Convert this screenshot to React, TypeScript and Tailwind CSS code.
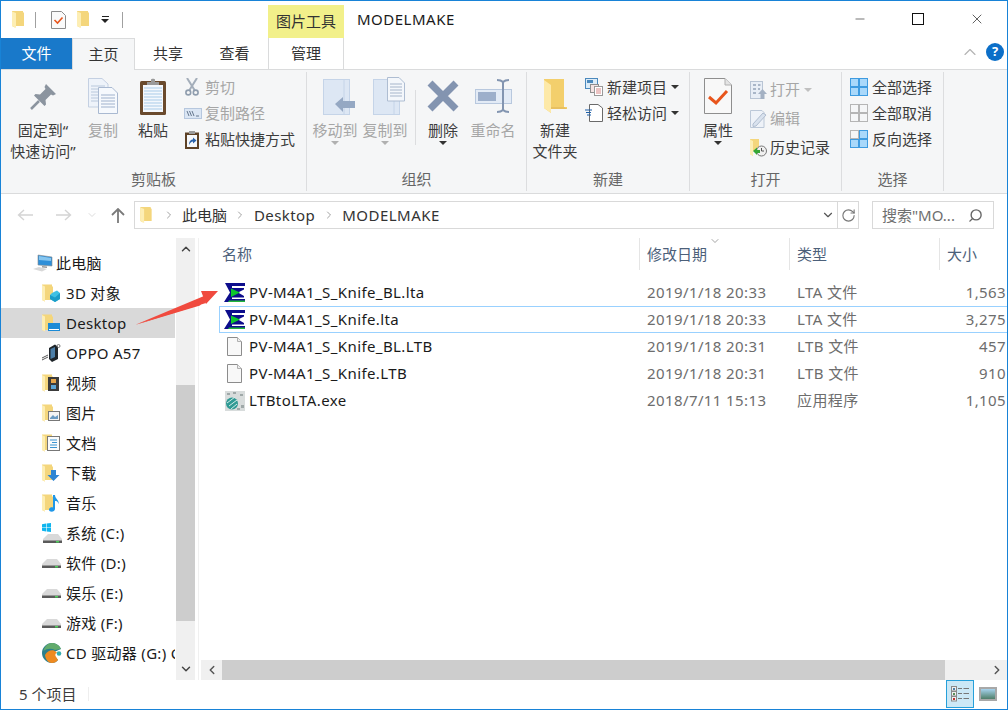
import type { ReactNode } from "react";
import { ChevronDown, ChevronLeft, ChevronRight, ChevronUp, Minus, RotateCw, Search, X } from "lucide-react";

function FolderTall({ className = "h-[17px] w-[12px]" }: { className?: string }) {
  return (
    <svg viewBox="0 0 12 17" className={className}>
      <path d="M0 0H11V1L12 2V15H3V16.5L0 15Z" fill="#f4d67c" />
      <path d="M0 0.5L4 2V17L0 15Z" fill="#fdeeb4" />
    </svg>
  );
}

function NavFolder({ children }: { children?: ReactNode }) {
  return (
    <svg viewBox="0 0 18 18" className="h-[18px] w-[18px]">
      <path d="M0 0.5H10V2L11 3V16H3V17.5L0 16Z" fill="#f4d67c" />
      <path d="M0 1L3 2.5V17.5L0 16Z" fill="#fdeeb4" />
      {children}
    </svg>
  );
}

function Caret({ muted = false }: { muted?: boolean }) {
  return (
    <div
      className={`h-0 w-0 border-x-[4px] border-t-[4px] border-x-transparent ${
        muted ? "border-t-[#b0b0b0]" : "border-t-[#333333]"
      }`}
    />
  );
}

function SmallCaret({ muted = false }: { muted?: boolean }) {
  return (
    <span
      className={`ml-[4px] inline-block h-0 w-0 border-x-[4px] border-t-[4px] border-x-transparent ${
        muted ? "border-t-[#c0c0c0]" : "border-t-[#333333]"
      }`}
    />
  );
}

function LargeButton(props: {
  w: string;
  icon: ReactNode;
  lines: string[];
  muted?: boolean;
  caret?: boolean;
}) {
  return (
    <div className={`flex shrink-0 flex-col items-center ${props.w}`}>
      <div className="flex h-[48px] items-center justify-center">{props.icon}</div>
      {props.lines.map((l) => (
        <div key={l} className={`h-[21px] whitespace-nowrap leading-[21px] ${props.muted ? "text-[#a6a6a6]" : "text-[#3c3c3c]"}`}>
          {l}
        </div>
      ))}
      {props.caret ? <Caret muted={props.muted} /> : null}
    </div>
  );
}

function SmallRow(props: { slot: string; h: string; icon: ReactNode; text: string; muted?: boolean; caret?: boolean }) {
  return (
    <div className={`flex items-center whitespace-nowrap ${props.h} ${props.muted ? "text-[#a6a6a6]" : "text-[#3c3c3c]"}`}>
      <div className={`flex shrink-0 items-center ${props.slot}`}>{props.icon}</div>
      {props.text}
      {props.caret ? <SmallCaret muted={props.muted} /> : null}
    </div>
  );
}

function Group({ w, label, children }: { w: string; label: string; children: ReactNode }) {
  return (
    <div className={`flex shrink-0 flex-col border-r border-[#dcdddf] ${w}`}>
      <div className="flex h-[98px] min-h-0 flex-1">{children}</div>
      <div className="h-[20px] text-center leading-[16px] text-[#666666]">{label}</div>
    </div>
  );
}

function PinIcon() {
  return (
    <svg viewBox="0 0 27 27" className="h-[27px] w-[27px]">
      <path d="M16 1L26 11L23 12.5L21 11.5L15.5 17L16 21.5L14.5 23L4 12.5L5.5 11L10 11.5L15.5 6L14.5 4Z" fill="#8b949f" />
      <path d="M9 18L1 26" stroke="#8b949f" strokeWidth="2.5" />
    </svg>
  );
}

function DocLines({ x, y, w, h, c = "#b9c8dc" }: { x: number; y: number; w: number; h: number; c?: string }) {
  const rows = [];
  for (let i = 0; i < Math.floor(h / 3); i++) {
    rows.push(<path key={i} d={`M${x} ${y + i * 3}H${x + w}`} stroke={c} strokeWidth="1" />);
  }
  return <>{rows}</>;
}

function CopyIcon() {
  return (
    <svg viewBox="0 0 30 36" className="h-[36px] w-[30px]">
      <path d="M0.5 0.5H14L20 6V29H0.5Z" fill="#eef3fa" stroke="#c4d0e2" />
      <DocLines x={3} y={8} w={14} h={19} />
      <path d="M10.5 9.5H24L29.5 15V35.5H10.5Z" fill="#f6f9fd" stroke="#a9b9d1" />
      <DocLines x={13} y={17} w={14} h={17} c="#9fb1cc" />
    </svg>
  );
}

function PasteIcon() {
  return (
    <svg viewBox="0 0 26 37" className="h-[37px] w-[26px]">
      <rect x="0" y="3" width="26" height="34" rx="1.5" fill="#6a4a2d" />
      <rect x="3" y="7" width="20" height="27" fill="#f4f8fd" />
      <DocLines x={4} y={10} w={18} h={24} c="#a9cbe8" />
      <path d="M7 7V4H11V1.5C11 .5 15 .5 15 1.5V4H19V7Z" fill="#9a9a9a" />
    </svg>
  );
}

function ScissorsIcon() {
  return (
    <svg viewBox="0 0 14 18" className="h-[18px] w-[14px]">
      <path d="M2 0L9.5 12M12 0L4.5 12" stroke="#a4aeba" strokeWidth="2" />
      <circle cx="3.3" cy="14.5" r="2.4" fill="none" stroke="#8f9dae" strokeWidth="1.6" />
      <circle cx="10.7" cy="14.5" r="2.4" fill="none" stroke="#8f9dae" strokeWidth="1.6" />
    </svg>
  );
}

function CopyPathIcon() {
  return (
    <svg viewBox="0 0 18 11" className="h-[11px] w-[18px]">
      <rect x="0.5" y="0.5" width="17" height="10" fill="#dbe6f4" stroke="#b6c7de" />
      <path d="M3 3L5 8M5.5 3L7.5 8M8 3L10 8" stroke="#66788f" strokeWidth="1" />
      <path d="M12 8H15" stroke="#66788f" />
    </svg>
  );
}

function PasteShortcutIcon() {
  return (
    <svg viewBox="0 0 14 18" className="h-[18px] w-[14px]">
      <rect x="0" y="1.5" width="14" height="16.5" fill="#5d4126" />
      <rect x="2" y="4" width="10" height="12" fill="#f6f8fb" />
      <rect x="4" y="0" width="6" height="3" fill="#9a9a9a" />
      <path d="M4 14C4 10 6 8.5 8 8.5V6.5L11.5 9.5L8 12.5V10.5C6.5 10.5 5 12 4 14Z" fill="#2a62a9" />
    </svg>
  );
}

function MoveIcon({ copy = false }: { copy?: boolean }) {
  return (
    <svg viewBox="0 0 34 38" className="ml-[8px] h-[38px] w-[34px]">
      <rect x="1.5" y="2.5" width="26" height="35" fill="#dde7f4" stroke="#c5d4e8" />
      <path d="M22 3V37" stroke="#c5d4e8" />
      {copy ? (
        <>
          <path d="M15.5 0.5H27L32.5 6V24H15.5Z" fill="#f4f7fb" stroke="#aebdd2" />
          <DocLines x={18} y={7} w={12} h={16} c="#a6b5ca" />
        </>
      ) : (
        <path d="M13 27L21 20V24H33V31H21V35Z" fill="#95a8c3" />
      )}
    </svg>
  );
}

function DeleteIcon() {
  return (
    <svg viewBox="0 0 32 32" className="h-[32px] w-[32px]">
      <path d="M3 3L29 29M29 3L3 29" stroke="#8394b0" strokeWidth="7" />
    </svg>
  );
}

function RenameIcon() {
  return (
    <svg viewBox="0 0 37 34" className="h-[34px] w-[37px]">
      <rect x="0.5" y="10.5" width="36" height="14" fill="#e3ebf6" stroke="#b8c8de" />
      <rect x="3" y="13" width="18" height="9" fill="#9dafcb" />
      <path d="M22 1C25 1 27 2 28 3C29 2 31 1 34 1M22 33C25 33 27 32 28 31C29 32 31 33 34 33M28 3V31" stroke="#8395b1" strokeWidth="2" fill="none" />
    </svg>
  );
}

function NewFolderIcon() {
  return (
    <svg viewBox="0 0 24 34" className="h-[34px] w-[24px]">
      <path d="M1 0H21V28H24V30H8V34L1 29Z" fill="#f3cf6c" />
      <path d="M1 1L8 6V34L1 29Z" fill="#fde9a8" />
      <path d="M8 30H24L21 28H8Z" fill="#e8c060" />
    </svg>
  );
}

function NewItemIcon() {
  return (
    <svg viewBox="0 0 18 18" className="h-[18px] w-[18px]">
      <rect x="0.5" y="0.5" width="12" height="10" fill="#dcecf8" stroke="#4b89bd" />
      <rect x="2" y="2" width="6" height="3" fill="#4b89bd" />
      <rect x="5.5" y="6.5" width="8" height="8" fill="#f4e3e3" stroke="#8f8f8f" />
      <rect x="9.5" y="8.5" width="8" height="9" fill="#fff" stroke="#999999" />
      <path d="M11 11H16M11 13H16M11 15H16" stroke="#d98787" />
    </svg>
  );
}

function EasyAccessIcon() {
  return (
    <svg viewBox="0 0 18 18" className="h-[18px] w-[18px]">
      <path d="M4.5 0.5H13L17.5 4V17.5H4.5Z" fill="#fff" stroke="#6a6a6a" />
      <path d="M0 6H7M1 8.5H6M2 11H6" stroke="#1d5fa8" strokeWidth="1" />
    </svg>
  );
}

function PropertiesIcon() {
  return (
    <svg viewBox="0 0 28 36" className="h-[36px] w-[28px]">
      <path d="M0.5 0.5H21L27.5 7V35.5H0.5Z" fill="#f8f8f8" stroke="#8e8e8e" />
      <path d="M21 0.5V7H27.5" fill="#e4e4e4" stroke="#b0b0b0" />
      <path d="M5 19L12 25L23 13" fill="none" stroke="#e8551c" strokeWidth="3" />
    </svg>
  );
}

function OpenIcon() {
  return (
    <svg viewBox="0 0 17 18" className="h-[18px] w-[17px]">
      <rect x="0.5" y="0.5" width="12" height="17" fill="#e8eef6" stroke="#b8c4d4" />
      <path d="M3 4H6M3 8H6M3 12H6M8 4H10.5M8 8H10" stroke="#a9b6c8" strokeWidth="2" />
      <path d="M8 13L12.5 8L17 13H14.5V18H10.5V13Z" fill="#a4b1c3" />
    </svg>
  );
}

function EditIcon() {
  return (
    <svg viewBox="0 0 17 18" className="h-[18px] w-[17px]">
      <path d="M0.5 0.5H12L14 2.5V17.5H0.5Z" fill="#eef2f8" stroke="#bcc8d8" />
      <path d="M3 14L13 3L16 5L6 16L3 16.5Z" fill="#d9e2ee" stroke="#b0bdcf" />
    </svg>
  );
}

function HistoryIcon() {
  return (
    <svg viewBox="0 0 17 18" className="h-[18px] w-[17px]">
      <path d="M0 0H9V12H3V17L0 15Z" fill="#f4d67c" />
      <path d="M0 0.5L3 2V17L0 15Z" fill="#fdeeb4" />
      <circle cx="11.5" cy="12" r="5" fill="#f0f0f0" stroke="#777777" />
      <path d="M11.5 9V12H14" stroke="#555555" fill="none" />
      <path d="M3 12L7 8.5V11H10V14H7V16Z" fill="#35a635" />
    </svg>
  );
}

function SelectGrid({ cells, stroke }: { cells: string[]; stroke: string[] }) {
  const pos = [
    [0.5, 0.5],
    [9.5, 0.5],
    [0.5, 9.5],
    [9.5, 9.5],
  ];
  return (
    <svg viewBox="0 0 18 18" className="h-[18px] w-[18px]">
      {pos.map((p, i) => (
        <rect key={i} x={p[0]} y={p[1]} width="8" height="8" fill={cells[i]} stroke={stroke[i]} />
      ))}
    </svg>
  );
}

function LtaIcon() {
  return (
    <svg viewBox="0 0 21 19" className="h-[19px] w-[21px]">
      <path d="M1 0H21V3H8V5H20V6.5L14 9.5L20 13V14.5H8V16H21V19H0L6 9.5Z" fill="#0d0d8c" />
      <path d="M7 5.5L16 9.5L7 14Z" fill="#0cc62c" />
      <path d="M5 17.5H21V19H4Z" fill="#22b83c" />
    </svg>
  );
}

function BlankFileIcon() {
  return (
    <svg viewBox="0 0 15 19" className="h-[19px] w-[15px]">
      <path d="M0.5 0.5H10.5L14.5 4.5V18.5H0.5Z" fill="#f8f8f8" stroke="#8c8c8c" />
      <path d="M10.5 0.5V4.5H14.5" fill="#eeeeee" stroke="#b0b0b0" />
    </svg>
  );
}

function ExeIcon() {
  return (
    <svg viewBox="0 0 20 20" className="h-[20px] w-[20px]">
      <rect width="20" height="20" fill="#d8dcdc" />
      <path d="M2 2H5V4H2ZM8 1H11V3H8ZM15 3H18V5H15ZM16 14H19V17H16ZM12 17H15V19H12Z" fill="#9fa8a8" />
      <circle cx="7" cy="12.5" r="6" fill="#2f9a94" />
      <path d="M2 12L10 6M4 15L12 9M6 18L12 13" stroke="#d3ece9" strokeWidth="1" />
    </svg>
  );
}

function DriveIcon() {
  return (
    <svg viewBox="0 0 19 9" className="h-[9px] w-[19px]">
      <path d="M5 0H15L19 5V7H0V5Z" fill="#d9d9d9" />
      <path d="M0 6.5H19V9H0Z" fill="#5a5a5a" />
      <rect x="13" y="7" width="3" height="1.5" fill="#4dd15a" />
    </svg>
  );
}

function WinDriveIcon() {
  return (
    <div className="relative h-[20px] w-[20px]">
      <div className="absolute bottom-0 right-0">
        <DriveIcon />
      </div>
      <svg viewBox="0 0 9 9" className="absolute left-0 top-0 h-[9px] w-[9px]">
        <path d="M0 1.2L4 .6V4.2H0ZM4.6 .5L9 0V4.2H4.6ZM0 4.8H4V8.4L0 7.8ZM4.6 4.8H9V9L4.6 8.5Z" fill="#10b5ee" />
      </svg>
    </div>
  );
}

function CdIcon() {
  return (
    <svg viewBox="0 0 20 20" className="h-[20px] w-[20px]">
      <path d="M10 0C14 0 17.5 2.5 19 6L10 10L16 17C14.5 18.8 12.5 20 10 20C4.5 20 0 15.5 0 10C0 4.5 4.5 0 10 0Z" fill="#2b7f8c" />
      <path d="M10 0C14 0 17.5 2.5 19 6L13 7C9 5 5 5.5 1.5 8C2.5 3.5 6 0 10 0Z" fill="#62ab6c" />
      <path d="M3 12C5 8 9 6.5 12 7.5L15 9.5C13.5 10.5 13 11.5 13.5 13L16 17C14.5 18.8 12.5 20 10 20C6.5 20 3.5 16.5 3 12Z" fill="#ee8a21" />
      <circle cx="17" cy="10.5" r="2.3" fill="#35aeb0" />
    </svg>
  );
}

const navItems: { label: string; icon: ReactNode; active?: boolean }[] = [
  {
    label: "3D 对象",
    icon: (
      <NavFolder>
        <path d="M10 9L15 6.5L18 9V15L13 18L8 15V11Z" fill="#3fc1e3" />
        <path d="M8 11L13 13.5L18 9V15L13 18L8 15Z" fill="#1b9dc8" />
      </NavFolder>
    ),
  },
  {
    label: "Desktop",
    active: true,
    icon: (
      <NavFolder>
        <rect x="6" y="9" width="12" height="8" fill="#1b8ad6" />
        <rect x="7" y="15" width="10" height="1" fill="#ffffff" />
      </NavFolder>
    ),
  },
  {
    label: "OPPO A57",
    icon: (
      <svg viewBox="0 0 19 18" className="h-[18px] w-[19px]">
        <path d="M7 4L13 0.5L16 3V15L10 18L7 15Z" fill="#1e2429" />
        <path d="M8.5 5L13 3V13L8.5 15Z" fill="#4b7ea8" />
        <path d="M0 14L6 11M0 16L6 13" stroke="#555555" />
        <circle cx="16.5" cy="2" r="1.5" fill="none" stroke="#777777" />
      </svg>
    ),
  },
  {
    label: "视频",
    icon: (
      <NavFolder>
        <rect x="6" y="3" width="11" height="14" fill="#3b3b3b" />
        <rect x="9" y="5" width="5" height="4" fill="#e6a64b" />
        <rect x="9" y="11" width="5" height="4" fill="#5ba5d6" />
      </NavFolder>
    ),
  },
  {
    label: "图片",
    icon: (
      <NavFolder>
        <rect x="6.5" y="7.5" width="11" height="9" fill="#f4f4f4" stroke="#777777" />
        <path d="M8 14L11 11L13 13L16 11V15H8Z" fill="#6b9bc3" />
      </NavFolder>
    ),
  },
  {
    label: "文档",
    icon: (
      <NavFolder>
        <rect x="5.5" y="2.5" width="12" height="14" fill="#fbfbfb" stroke="#777777" />
        <path d="M8 6H15M10 8.5H15M8 11H15M8 13.5H15" stroke="#3b94d1" />
      </NavFolder>
    ),
  },
  {
    label: "下载",
    icon: (
      <NavFolder>
        <path d="M9 6H14V11H17.5L11.5 17L5.5 11H9Z" fill="#2f86d3" />
      </NavFolder>
    ),
  },
  {
    label: "音乐",
    icon: (
      <NavFolder>
        <path d="M11 1H13C13 5 17.5 6 16.5 10C16 7.5 14.5 7 13 7V15C13 17 10.5 18 8.5 17.5C6.5 17 6.5 14.5 8.5 13.5C9.5 13 10.5 13 11 13.5Z" fill="#1f97e8" />
      </NavFolder>
    ),
  },
  { label: "系统 (C:)", icon: <WinDriveIcon /> },
  { label: "软件 (D:)", icon: <DriveIcon /> },
  { label: "娱乐 (E:)", icon: <DriveIcon /> },
  { label: "游戏 (F:)", icon: <DriveIcon /> },
  { label: "CD 驱动器 (G:) CC", icon: <CdIcon /> },
];

const files = [
  { name: "PV-M4A1_S_Knife_BL.lta", date: "2019/1/18 20:33", type: "LTA 文件", size: "1,563", icon: <LtaIcon /> },
  { name: "PV-M4A1_S_Knife.lta", date: "2019/1/18 20:33", type: "LTA 文件", size: "3,275", icon: <LtaIcon />, selected: true },
  { name: "PV-M4A1_S_Knife_BL.LTB", date: "2019/1/18 20:31", type: "LTB 文件", size: "457", icon: <BlankFileIcon /> },
  { name: "PV-M4A1_S_Knife.LTB", date: "2019/1/18 20:31", type: "LTB 文件", size: "910", icon: <BlankFileIcon /> },
  { name: "LTBtoLTA.exe", date: "2018/7/11 15:13", type: "应用程序", size: "1,105", icon: <ExeIcon /> },
];

export default function App() {
  return (
    <div className="relative flex h-[710px] w-[1008px] flex-col overflow-hidden border border-[#1883d7] bg-white font-['Noto_Sans','Noto_Sans_CJK_SC',sans-serif] text-[15px] text-[#1a1a1a]">
      {/* title bar */}
      <div className="flex h-[37px] shrink-0 items-start">
        <div className="flex h-[37px] w-[267px] shrink-0 items-center pl-[11px]">
          <FolderTall />
          <div className="ml-[11px] h-[16px] w-px bg-[#a0a0a0]" />
          <svg viewBox="0 0 15 18" className="ml-[15px] h-[18px] w-[15px]">
            <path d="M0.5 0.5H10.5L14.5 4.5V17.5H0.5Z" fill="#fafafa" stroke="#8c8c8c" />
            <path d="M3.5 9L6.5 12L11.5 6.5" fill="none" stroke="#e8551c" strokeWidth="1.6" />
          </svg>
          <div className="ml-[11px]">
            <FolderTall />
          </div>
          <div className="ml-[12px] flex flex-col items-center">
            <div className="mb-[2px] h-px w-[7px] bg-[#222222]" />
            <div className="h-0 w-0 border-x-[4px] border-t-[4px] border-x-transparent border-t-[#222222]" />
          </div>
          <div className="ml-[13px] h-[16px] w-px bg-[#a0a0a0]" />
        </div>
        <div className="mt-[4px] flex h-[33px] w-[76px] shrink-0 items-center justify-center bg-[#f2f08a] text-[#333333]">图片工具</div>
        <div className="ml-[13px] mt-[7px] tracking-[0.5px] text-[#1a1a1a]">MODELMAKE</div>
        <div className="ml-auto flex items-center pt-[10px]">
          <Minus className="mr-[45px] h-[14px] w-[14px] text-[#111111]" strokeWidth={1} absoluteStrokeWidth />
          <div className="mr-[45px] h-[12px] w-[12px] border border-[#111111]" />
          <X className="mr-[22px] h-[16px] w-[16px] text-[#111111]" strokeWidth={1} absoluteStrokeWidth />
        </div>
      </div>

      {/* tabs */}
      <div className="flex h-[32px] shrink-0 border-b border-[#dadbdc]">
        <div className="flex h-[31px] w-[71px] items-center justify-center bg-[#1979ca] pb-[1px] text-white">文件</div>
        <div className="z-10 flex h-[32px] w-[63px] items-center justify-center border-x border-t border-[#dadbdc] bg-[#f5f6f7] pb-[1px] text-[#333333]">主页</div>
        <div className="flex h-[31px] w-[66px] items-center justify-center pb-[1px] text-[#333333]">共享</div>
        <div className="flex h-[31px] w-[67px] items-center justify-center pb-[1px] text-[#333333]">查看</div>
        <div className="flex h-[31px] w-[76px] items-center justify-center border-x border-[#dadbdc] pb-[1px] text-[#333333]">管理</div>
        <div className="ml-auto flex items-center pb-[3px]">
          <ChevronUp className="mr-[6px] h-[20px] w-[20px] text-[#b4b4b4]" strokeWidth={1.4} />
          <div className="mr-[3px] flex h-[18px] w-[18px] items-center justify-center rounded-full bg-[#0c6fc8] text-[13px] font-bold text-white">?</div>
        </div>
      </div>

      {/* ribbon */}
      <div className="flex h-[124px] shrink-0 border-b border-[#dadbdc] bg-[#f5f6f7] pt-[2px] pb-[2px]">
        <Group w="w-[306px]" label="剪贴板">
          <div className="ml-[5px] flex">
            <LargeButton w="w-[74px]" icon={<PinIcon />} lines={["固定到“", "快速访问”"]} />
            <LargeButton w="w-[46px]" icon={<CopyIcon />} lines={["复制"]} muted />
            <LargeButton w="w-[54px]" icon={<PasteIcon />} lines={["粘贴"]} />
          </div>
          <div className="ml-[4px] pt-[2px]">
            <SmallRow slot="w-[21px] pl-[1px]" h="h-[26px]" icon={<ScissorsIcon />} text="剪切" muted />
            <SmallRow slot="w-[21px]" h="h-[26px]" icon={<CopyPathIcon />} text="复制路径" muted />
            <SmallRow slot="w-[21px] pl-[1px]" h="h-[27px]" icon={<PasteShortcutIcon />} text="粘贴快捷方式" />
          </div>
        </Group>
        <Group w="w-[220px]" label="组织">
          <div className="flex">
            <LargeButton w="w-[50px] ml-[3px]" icon={<MoveIcon />} lines={["移动到"]} muted caret />
            <LargeButton w="w-[50px]" icon={<MoveIcon copy />} lines={["复制到"]} muted caret />
            <div className="ml-[5px] mr-[2px] mt-[18px] h-[55px] w-px bg-[#dcdddf]" />
            <LargeButton w="w-[50px]" icon={<DeleteIcon />} lines={["删除"]} caret />
            <LargeButton w="w-[50px]" icon={<RenameIcon />} lines={["重命名"]} muted />
          </div>
        </Group>
        <Group w="w-[163px]" label="新建">
          <LargeButton w="w-[50px] ml-[3px]" icon={<NewFolderIcon />} lines={["新建", "文件夹"]} />
          <div className="ml-[5px] pt-[2px]">
            <SmallRow slot="w-[22px]" h="h-[26px]" icon={<NewItemIcon />} text="新建项目" caret />
            <SmallRow slot="w-[22px]" h="h-[26px]" icon={<EasyAccessIcon />} text="轻松访问" caret />
          </div>
        </Group>
        <Group w="w-[152px]" label="打开">
          <LargeButton w="w-[50px] ml-[3px]" icon={<PropertiesIcon />} lines={["属性"]} caret />
          <div className="ml-[7px] pt-[3px]">
            <SmallRow slot="w-[20px]" h="h-[29px]" icon={<OpenIcon />} text="打开" muted caret />
            <SmallRow slot="w-[20px]" h="h-[29px]" icon={<EditIcon />} text="编辑" muted />
            <SmallRow slot="w-[20px]" h="h-[29px]" icon={<HistoryIcon />} text="历史记录" />
          </div>
        </Group>
        <Group w="w-[102px]" label="选择">
          <div className="ml-[8px] pt-[2px]">
            <SmallRow
              slot="w-[22px]"
              h="h-[26px]"
              icon={<SelectGrid cells={["#a9d8fa", "#a9d8fa", "#a9d8fa", "#a9d8fa"]} stroke={["#3e9be0", "#3e9be0", "#3e9be0", "#3e9be0"]} />}
              text="全部选择"
            />
            <SmallRow
              slot="w-[22px]"
              h="h-[26px]"
              icon={<SelectGrid cells={["#f5f6f7", "#f5f6f7", "#f5f6f7", "#f5f6f7"]} stroke={["#b5b5b5", "#b5b5b5", "#b5b5b5", "#b5b5b5"]} />}
              text="全部取消"
            />
            <SmallRow
              slot="w-[22px]"
              h="h-[26px]"
              icon={<SelectGrid cells={["#f5f6f7", "#a9d8fa", "#a9d8fa", "#a9d8fa"]} stroke={["#b5b5b5", "#3e9be0", "#3e9be0", "#3e9be0"]} />}
              text="反向选择"
            />
          </div>
        </Group>
      </div>

      {/* address bar */}
      <div className="flex h-[44px] shrink-0 items-center pb-[2px]">
        <svg viewBox="0 0 16 12" className="ml-[16px] h-[12px] w-[16px]">
          <path d="M7 1L1.5 6L7 11M1.5 6H16" fill="none" stroke="#d4d4d4" strokeWidth="1.4" />
        </svg>
        <svg viewBox="0 0 16 12" className="ml-[23px] h-[12px] w-[16px]">
          <path d="M9 1L14.5 6L9 11M14.5 6H0" fill="none" stroke="#d4d4d4" strokeWidth="1.4" />
        </svg>
        <ChevronDown className="ml-[14px] h-[12px] w-[12px] text-[#d0d0d0]" strokeWidth={1.5} />
        <svg viewBox="0 0 14 15" className="ml-[13px] h-[15px] w-[14px]">
          <path d="M1 7L7 1L13 7M7 1V15" fill="none" stroke="#7a7a7a" strokeWidth="1.8" />
        </svg>
        <div className="ml-[9px] flex h-[28px] w-[725px] shrink-0 items-center border border-[#d9d9d9] pl-[5px] text-[#333333]">
          <FolderTall className="h-[16px] w-[12px]" />
          <ChevronRight className="ml-[11px] mr-[7px] h-[12px] w-[12px] text-[#8a8a8a]" strokeWidth={1.6} />
          此电脑
          <ChevronRight className="ml-[7px] mr-[8px] h-[12px] w-[12px] text-[#8a8a8a]" strokeWidth={1.6} />
          <span className="tracking-[0.4px]">Desktop</span>
          <ChevronRight className="ml-[8px] mr-[7px] h-[12px] w-[12px] text-[#8a8a8a]" strokeWidth={1.6} />
          <span className="tracking-[0.5px]">MODELMAKE</span>
          <ChevronDown className="ml-auto mr-[2px] h-[14px] w-[14px] text-[#555555]" strokeWidth={2} />
          <div className="flex h-full w-[21px] items-center justify-center border-l border-[#d9d9d9]">
            <RotateCw className="h-[15px] w-[15px] text-[#777777]" strokeWidth={1.8} />
          </div>
        </div>
        <div className="ml-[13px] flex h-[28px] w-[122px] shrink-0 items-center border border-[#d9d9d9] pl-[9px] text-[#6f6f6f]">
          搜索"MO...
          <Search className="ml-auto mr-[10px] h-[15px] w-[15px] -scale-x-100 text-[#666666]" strokeWidth={2.2} />
        </div>
      </div>

      {/* main */}
      <div className="flex min-h-0 flex-1">
        <div className="flex w-[174px] shrink-0 flex-col overflow-hidden pt-[10px] tracking-[0.3px]">
          <div className="flex h-[30px] shrink-0 items-center whitespace-nowrap pl-[32px]">
            <svg viewBox="0 0 20 18" className="mr-[3px] h-[18px] w-[20px]">
              <path d="M5 1L19 3V12L5 11Z" fill="#2f8fd8" stroke="#8a8a8a" strokeWidth="0.6" />
              <path d="M6 2L18 4V7L6 6Z" fill="#86c6f0" />
              <path d="M9 12L14 12.5L14 14L9 13.5Z" fill="#9a9a9a" />
              <path d="M0 15L6 13L14 15L9 17.5Z" fill="#d8d8d8" />
            </svg>
            此电脑
          </div>
          {navItems.map((n) => (
            <div
              key={n.label}
              className={`flex h-[30px] shrink-0 items-center whitespace-nowrap pl-[41px] ${n.active ? "bg-[#d9d9d9]" : ""}`}
            >
              <div className="flex w-[24px] shrink-0 items-center">{n.icon}</div>
              {n.label}
            </div>
          ))}
        </div>

        <div className="ml-[1px] flex h-[442px] w-[19px] shrink-0 flex-col items-center bg-[#f0f0f0]">
          <div className="flex h-[22px] items-center">
            <ChevronUp className="h-[14px] w-[14px] text-[#444444]" strokeWidth={2.5} />
          </div>
          <div className="mt-[125px] h-[236px] w-full bg-[#cdcdcd]" />
          <div className="mt-auto flex h-[22px] items-center">
            <ChevronDown className="h-[14px] w-[14px] text-[#444444]" strokeWidth={2.5} />
          </div>
        </div>
        <div className="ml-[3px] w-px shrink-0 bg-[#f0f0f0]" />

        <div className="flex min-w-0 flex-1 flex-col pl-[1px]">
          <div className="relative flex h-[32px] shrink-0 text-[#4c607a]">
            <div className="flex w-[439px] shrink-0 items-center pl-[22px] text-[#4c607a]">名称</div>
            <div className="flex w-[150px] shrink-0 items-center border-l border-[#e5e5e5] pl-[7px]">修改日期</div>
            <div className="flex w-[150px] shrink-0 items-center border-l border-[#e5e5e5] pl-[7px]">类型</div>
            <div className="flex flex-1 items-center border-l border-[#e5e5e5] pl-[7px]">大小</div>
            <ChevronDown className="absolute left-[509px] top-[-3px] h-[12px] w-[12px] text-[#666666]" strokeWidth={1.2} />
          </div>
          <div className="flex flex-1 flex-col pl-[19px] pt-[9px] tracking-[0.4px]">
            {files.map((f) => (
              <div
                key={f.name}
                className={`flex h-[27px] shrink-0 items-center whitespace-nowrap border-y border-l pl-[4px] ${
                  f.selected ? "border-[#99d1ff]" : "border-transparent"
                }`}
              >
                <div className="flex w-[25px] shrink-0 items-center justify-center pr-[4px]">{f.icon}</div>
                <div className="w-[398px] shrink-0">{f.name}</div>
                <div className="w-[150px] shrink-0 text-[#6d6d6d]">{f.date}</div>
                <div className="w-[150px] shrink-0 text-[#6d6d6d]">{f.type}</div>
                <div className="w-[59px] shrink-0 text-right text-[#6d6d6d]">{f.size}</div>
              </div>
            ))}
          </div>
          <div className="ml-[1px] mt-auto flex h-[20px] shrink-0 items-center bg-[#f0f0f0]">
            <div className="flex w-[21px] shrink-0 items-center justify-center">
              <ChevronLeft className="h-[14px] w-[14px] text-[#555555]" strokeWidth={2.5} />
            </div>
            <div className="h-full w-[723px] bg-[#cdcdcd]" />
            <div className="ml-auto flex w-[20px] items-center justify-center">
              <ChevronRight className="h-[14px] w-[14px] text-[#555555]" strokeWidth={2.5} />
            </div>
          </div>
        </div>
      </div>

      {/* status bar */}
      <div className="flex h-[29px] shrink-0 items-start text-[#3c3c3c]">
        <div className="ml-[18px] mt-[3px] w-[69px]">5 个项目</div>
        <div className="mt-[7px] h-[14px] w-px bg-[#eeeeee]" />
        <div className="ml-auto flex h-[28px] items-center">
          <div className="flex h-full w-[28px] items-center justify-center border border-[#26a0da] bg-[#cbe8f6]">
            <svg viewBox="0 0 18 16" className="h-[16px] w-[18px]">
              <rect x="0.5" y="0.5" width="5" height="4.5" fill="#f0f0f0" stroke="#8a8a8a" />
              <rect x="0.5" y="5.5" width="5" height="4.5" fill="#f0f0f0" stroke="#8a8a8a" />
              <rect x="0.5" y="10.5" width="5" height="4.5" fill="#f0f0f0" stroke="#8a8a8a" />
              <rect x="2" y="2" width="2" height="2" fill="#4a7fa8" />
              <rect x="2" y="7" width="2" height="2" fill="#5a8f5a" />
              <rect x="2" y="12" width="2" height="2" fill="#c03030" />
              <path d="M7 2.5H11M12.5 2.5H18M7 7.5H11M12.5 7.5H18M7 12.5H11M12.5 12.5H18" stroke="#777777" />
            </svg>
          </div>
          <div className="ml-[5px] mr-[10px] h-[14px] w-[18px] border-2 border-[#a8a8a8] bg-gradient-to-b from-[#a7d3ee] to-[#4f7f6a]" />
        </div>
      </div>

      {/* annotation arrow */}
      <svg viewBox="0 0 90 40" className="pointer-events-none absolute left-[133px] top-[287px] h-[40px] w-[90px]">
        <path d="M1 37L69 13L66 17.5L1 37Z M67 3L84 3L72 16Z" fill="#f04a3e" />
        <path d="M2 36.5L70 8L72 15Z" fill="#f04a3e" />
      </svg>
    </div>
  );
}
